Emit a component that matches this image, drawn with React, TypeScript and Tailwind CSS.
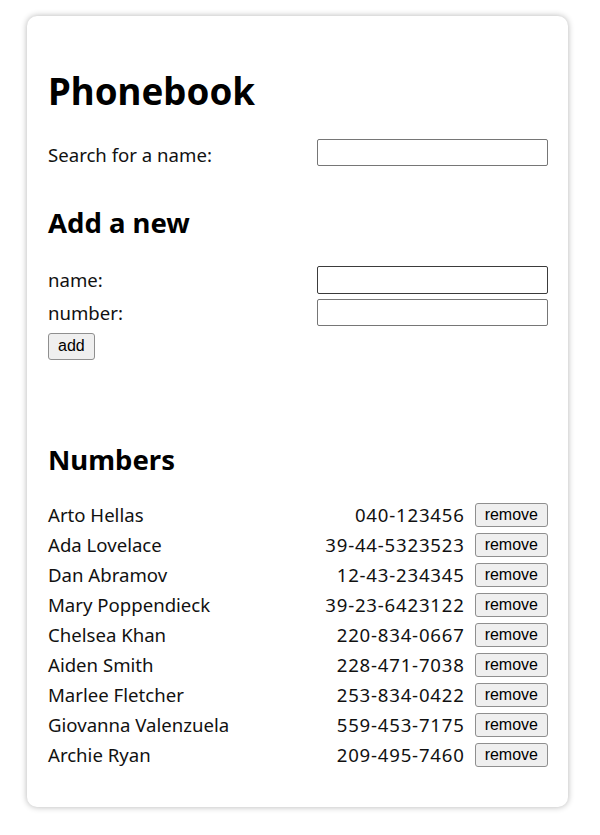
import React from "react";

const people = [
  { name: "Arto Hellas", number: "040-123456" },
  { name: "Ada Lovelace", number: "39-44-5323523" },
  { name: "Dan Abramov", number: "12-43-234345" },
  { name: "Mary Poppendieck", number: "39-23-6423122" },
  { name: "Chelsea Khan", number: "220-834-0667" },
  { name: "Aiden Smith", number: "228-471-7038" },
  { name: "Marlee Fletcher", number: "253-834-0422" },
  { name: "Giovanna Valenzuela", number: "559-453-7175" },
  { name: "Archie Ryan", number: "209-495-7460" },
];

function Btn({ children }: { children: React.ReactNode }) {
  return (
    <button className="h-[24px] px-[9px] border border-[#8f8f8f] rounded-[3px] bg-[#efefef] text-[16px] leading-none text-black font-['Liberation_Sans',sans-serif]">
      {children}
    </button>
  );
}

function Field({ focused }: { focused?: boolean }) {
  return (
    <input
      className={
        focused
          ? "w-[231px] h-[28px] border border-[#3b3b3b] rounded-[2px] bg-white"
          : "w-[231px] h-[27px] border border-[#767676] rounded-[2px] bg-white"
      }
    />
  );
}

export default function App() {
  return (
    <div className="min-h-screen bg-white pt-[16px] pl-[27px] font-['Noto_Sans',sans-serif] text-[#111]">
      <div className="w-[541px] rounded-[10px] bg-white shadow-[0_0_6px_rgba(0,0,0,0.3)] pl-[21px] pr-[20px] pt-[53px] pb-[37px]">
        <h1 className="text-[36.7px] font-bold leading-[44px] text-black">Phonebook</h1>
        <div className="mt-[26px] flex items-start justify-between text-[18.6px]">
          <span className="pt-[2px]">Search for a name:</span>
          <Field />
        </div>

        <h2 className="mt-[37px] text-[27.5px] font-bold leading-[34px] text-black">Add a new</h2>
        <div className="mt-[26px] flex flex-col gap-[5px] text-[18.6px]">
          <div className="flex items-center justify-between">
            <span>name:</span>
            <Field focused />
          </div>
          <div className="flex items-center justify-between">
            <span>number:</span>
            <Field />
          </div>
        </div>
        <div className="mt-[6px]">
          <button className="h-[27px] px-[9px] border border-[#8f8f8f] rounded-[3px] bg-[#efefef] text-[16px] leading-none text-black font-['Liberation_Sans',sans-serif]">
            add
          </button>
        </div>

        <h2 className="mt-[83px] text-[27.5px] font-bold leading-[34px] text-black">Numbers</h2>
        <div className="mt-[23px] flex flex-col">
          {people.map((p) => (
            <div key={p.name} className="flex items-center h-[30px] text-[18.6px]">
              <span className="flex-1">{p.name}</span>
              <span className="mr-[10px] tracking-[0.8px]">{p.number}</span>
              <Btn>remove</Btn>
            </div>
          ))}
        </div>
      </div>
    </div>
  );
}
